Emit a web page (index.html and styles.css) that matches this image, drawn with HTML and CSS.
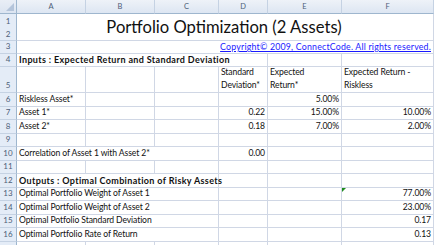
FILE: index.html
```html
<!DOCTYPE html>
<html>
<head>
<meta charset="utf-8">
<link rel="stylesheet" href="styles.css">
</head>
<body>
<div class="sheet">
  <div class="corner"><span class="tri"></span></div>
  <div class="ch">A</div><div class="ch">B</div><div class="ch">C</div><div class="ch">D</div><div class="ch">E</div><div class="ch">F</div>

  <div class="rh r12">1<br>2</div>
  <div class="c title span6 r12">Portfolio Optimization (2 Assets)</div>

  <div class="rh">3</div>
  <div class="c span6 copy"><a href="#">Copyright© 2009, ConnectCode. All rights reserved.</a></div>

  <div class="rh">4</div>
  <div class="c span4 b">Inputs : Expected Return and Standard Deviation</div>
  <div class="c"></div><div class="c"></div>

  <div class="rh tall">5</div>
  <div class="c tall"></div><div class="c tall"></div><div class="c tall"></div>
  <div class="c tall wrap"><span>Standard<br>Deviation*</span></div>
  <div class="c tall wrap"><span>Expected<br>Return*</span></div>
  <div class="c tall wrap"><span>Expected Return -<br>Riskless</span></div>

  <div class="rh">6</div>
  <div class="c">Riskless Asset*</div><div class="c"></div><div class="c"></div><div class="c"></div>
  <div class="c n">5.00%</div><div class="c"></div>

  <div class="rh">7</div>
  <div class="c">Asset 1*</div><div class="c"></div><div class="c"></div><div class="c n">0.22</div>
  <div class="c n">15.00%</div><div class="c n">10.00%</div>

  <div class="rh">8</div>
  <div class="c">Asset 2*</div><div class="c"></div><div class="c"></div><div class="c n">0.18</div>
  <div class="c n">7.00%</div><div class="c n">2.00%</div>

  <div class="rh">9</div>
  <div class="c"></div><div class="c"></div><div class="c"></div><div class="c"></div><div class="c"></div><div class="c"></div>

  <div class="rh">10</div>
  <div class="c span3">Correlation of Asset 1 with Asset 2*</div><div class="c n">0.00</div>
  <div class="c"></div><div class="c"></div>

  <div class="rh">11</div>
  <div class="c"></div><div class="c"></div><div class="c"></div><div class="c"></div><div class="c"></div><div class="c"></div>

  <div class="rh">12</div>
  <div class="c span3 b">Outputs : Optimal Combination of Risky Assets</div><div class="c"></div>
  <div class="c"></div><div class="c"></div>

  <div class="rh">13</div>
  <div class="c span3">Optimal Portfolio Weight of Asset 1</div><div class="c"></div>
  <div class="c"></div><div class="c n err">77.00%</div>

  <div class="rh">14</div>
  <div class="c span3">Optimal Portfolio Weight of Asset 2</div><div class="c"></div>
  <div class="c"></div><div class="c n">23.00%</div>

  <div class="rh">15</div>
  <div class="c span3">Optimal Potfolio Standard Deviation</div><div class="c"></div>
  <div class="c"></div><div class="c n">0.17</div>

  <div class="rh">16</div>
  <div class="c span3">Optimal Portfolio Rate of Return</div><div class="c"></div>
  <div class="c"></div><div class="c n">0.13</div>

  <div class="rh"></div>
  <div class="c"></div><div class="c"></div><div class="c"></div><div class="c"></div><div class="c"></div><div class="c"></div>
</div>
</body>
</html>
```

FILE: styles.css
```css
html, body {
  margin: 0;
  padding: 0;
  background: #ffffff;
  overflow: hidden;
}
.sheet {
  display: grid;
  grid-template-columns: 17px 69px 69px 64px 49px 74px 92px;
  grid-template-rows: 14px 13.3px 13.3px 13.3px 13.3px 26.3px repeat(11, 13.5px) 13.5px;
  font-family: "Lato", "Open Sans", sans-serif;
  font-size: 8.6px;
  letter-spacing: -0.1px;
  color: #111;
  width: 434px;
}
.corner {
  background: linear-gradient(#e9eef6, #dbe4f1);
  border-right: 1px solid #9eb6ce;
  border-bottom: 1px solid #9eb6ce;
  box-sizing: border-box;
  position: relative;
}
.tri {
  position: absolute;
  right: 2px;
  bottom: 2px;
  width: 0;
  height: 0;
  border-left: 8px solid transparent;
  border-bottom: 8px solid #b4c4da;
}
.ch {
  background: linear-gradient(#eef2f8, #dde6f2);
  border-right: 1px solid #c5d2e3;
  border-bottom: 1px solid #9eb6ce;
  box-sizing: border-box;
  text-align: center;
  color: #4d6078;
  font-size: 7.5px;
  letter-spacing: 0;
  line-height: 13px;
}
.rh {
  background: #e4ecf7;
  border-right: 1px solid #9eb6ce;
  border-bottom: 1px solid #c5d2e3;
  box-sizing: border-box;
  text-align: center;
  color: #4d6078;
  font-size: 8px;
  letter-spacing: 0;
  display: flex;
  align-items: flex-end;
  justify-content: center;
  padding-bottom: 1px;
  line-height: 11px;
}
.rh.r12 {
  grid-row: span 2;
  display: block;
  padding-top: 1px;
  line-height: 13.3px;
}
.c {
  border-right: 1px solid #d0d7e5;
  border-bottom: 1px solid #d0d7e5;
  box-sizing: border-box;
  padding: 0 2px;
  white-space: nowrap;
  display: flex;
  align-items: flex-end;
  line-height: 11px;
  padding-bottom: 1px;
  position: relative;
}
.span6 { grid-column: span 6; }
.span4 { grid-column: span 4; }
.span3 { grid-column: span 3; }
.r12 { grid-row: span 2; }
.title {
  justify-content: center;
  align-items: center;
  font-size: 16.6px;
  letter-spacing: 0;
  padding-top: 2px;
  padding-right: 4px;
}
.copy {
  justify-content: flex-end;
}
.copy a {
  color: #1a1aff;
  text-decoration: underline;
  font-size: 8.8px;
  letter-spacing: 0.2px;
}
.b {
  font-weight: bold;
  font-size: 9px;
  letter-spacing: 0.35px;
}
.n { justify-content: flex-end; }
.wrap {
  align-items: flex-end;
  line-height: 13px;
  padding-bottom: 0;
}
.err::before {
  content: "";
  position: absolute;
  left: 0;
  top: 0;
  border-top: 4px solid #1e8a1e;
  border-right: 4px solid transparent;
}
```
